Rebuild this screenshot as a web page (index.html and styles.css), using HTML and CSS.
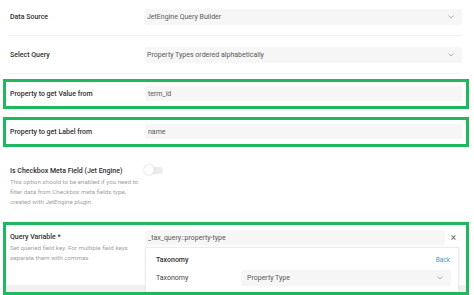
FILE: index.html
```html
<!DOCTYPE html>
<html lang="en">
<head>
    <meta charset="UTF-8">
    <meta name="viewport" content="width=device-width, initial-scale=1.0">
    <title>Query Settings</title>
    <link rel="stylesheet" href="styles.css">
</head>
<body>
    <div class="form">
        <div class="row first">
            <div class="label">Data Source</div>
            <div class="field select">JetEngine Query Builder
                <svg class="chev" width="6" height="4" viewBox="0 0 6 4"><polyline points="0.5,0.5 3,3 5.5,0.5" fill="none" stroke="#9a9a9a" stroke-width="0.8"/></svg>
            </div>
        </div>
        <div class="sep"></div>
        <div class="row second">
            <div class="label">Select Query</div>
            <div class="field select">Property Types ordered alphabetically
                <svg class="chev" width="6" height="4" viewBox="0 0 6 4"><polyline points="0.5,0.5 3,3 5.5,0.5" fill="none" stroke="#9a9a9a" stroke-width="0.8"/></svg>
            </div>
        </div>
        <div class="sep"></div>

        <div class="row hl">
            <div class="label">Property to get Value from</div>
            <div class="field input">term_id</div>
        </div>
        <div class="row hl gap">
            <div class="label">Property to get Label from</div>
            <div class="field input">name</div>
        </div>

        <div class="row check">
            <div class="label-col">
                <div class="label">Is Checkbox Meta Field (Jet Engine)</div>
                <p class="desc">This option should to be enabled if you need to<br>filter data from Checkbox meta fields type,<br>created with JetEngine plugin.</p>
            </div>
            <div class="toggle"></div>
        </div>

        <div class="hl query">
            <div class="q-main">
                <div class="label-col">
                    <div class="label">Query Variable *</div>
                    <p class="desc">Set queried field key. For multiple field keys<br>separate them with commas</p>
                </div>
                <div class="q-ctrl">
                    <div class="field input">_tax_query::property-type</div>
                    <span class="close">&times;</span>
                </div>
            </div>
            <div class="q-foot"></div>
            <div class="popup">
                <div class="pop-head">
                    <span class="pop-title">Taxonomy</span>
                    <span class="back">Back</span>
                </div>
                <div class="pop-row">
                    <span class="pop-label">Taxonomy</span>
                    <div class="field select">Property Type
                        <svg class="chev" width="6" height="4" viewBox="0 0 6 4"><polyline points="0.5,0.5 3,3 5.5,0.5" fill="none" stroke="#9a9a9a" stroke-width="0.8"/></svg>
                    </div>
                </div>
            </div>
        </div>
    </div>
</body>
</html>
```

FILE: styles.css
```css
body {
    margin: 0;
    background: #fff;
    font-family: Roboto, "Liberation Sans", sans-serif;
    color: #333;
}
.form {
    width: 474px;
}
.row {
    display: flex;
    align-items: center;
    padding: 0 12px 0 10px;
}
.row.first {
    padding-top: 9px;
    padding-bottom: 10px;
}
.row.second {
    padding-top: 11px;
    padding-bottom: 10px;
}
.sep {
    height: 1px;
    margin: 0 12px 0 8px;
    background: #f1f1f1;
}
.label {
    width: 135px;
    flex: none;
    font-size: 7px;
    line-height: 10px;
    font-weight: 500;
    color: #2f2f2f;
    white-space: nowrap;
}
.label-col {
    width: 135px;
    flex: none;
}
.field {
    flex: 1;
    height: 15px;
    display: flex;
    align-items: center;
    padding: 0 6px 0 3px;
    background: #f6f6f6;
    border-radius: 2px;
    font-size: 7px;
    color: #5a5a5a;
    white-space: nowrap;
}
.field.select {
    height: 16px;
    justify-content: space-between;
    padding-left: 2px;
}
.chev {
    margin-right: 2px;
}
.hl {
    margin: 0 5px 0 3px;
    border: 3px solid #1fb85e;
}
.row.hl {
    padding: 4px 4px 5px 4px;
}
.first + .sep + .second + .sep + .hl {
    margin-top: 5px;
}
.row.gap {
    margin-top: 8px;
}
.row.check {
    align-items: flex-start;
    padding-top: 19px;
    padding-bottom: 15px;
}
.desc {
    margin: 1px 0 0;
    font-size: 6.2px;
    line-height: 10px;
    color: #a3a3a3;
    white-space: nowrap;
}
.toggle {
    position: relative;
    width: 18px;
    height: 7px;
    margin-top: 1px;
    border-radius: 4px;
    background: #ededed;
}
.toggle::before {
    content: "";
    position: absolute;
    left: -1px;
    top: -2px;
    width: 10px;
    height: 10px;
    border-radius: 50%;
    background: #fff;
    box-shadow: 0 0 2px rgba(0, 0, 0, 0.25);
}
.query {
    position: relative;
}
.q-main {
    display: flex;
    align-items: flex-start;
    height: 55px;
    padding: 5px 4px 0 4px;
}
.q-main .label {
    margin-top: 2px;
}
.q-ctrl {
    flex: 1;
    display: flex;
    align-items: center;
}
.close {
    width: 17px;
    text-align: center;
    font-size: 10px;
    color: #666;
}
.q-foot {
    height: 7px;
    background: #f1f1f1;
}
.popup {
    position: absolute;
    top: 22px;
    left: 139px;
    width: 314px;
    height: 45px;
    box-sizing: border-box;
    padding: 7px 7px 0 10px;
    background: #fff;
    border: 1px solid #ececec;
    border-bottom: none;
    box-shadow: 0 0 3px rgba(0, 0, 0, 0.06);
}
.pop-head {
    display: flex;
    justify-content: space-between;
    font-size: 7px;
    line-height: 10px;
}
.pop-title {
    font-weight: 500;
    color: #2f2f2f;
}
.back {
    font-size: 6.5px;
    color: #3d9bcf;
    margin-right: 1px;
}
.pop-row {
    display: flex;
    align-items: center;
    margin-top: 5px;
}
.pop-label {
    width: 85px;
    flex: none;
    font-size: 7px;
    color: #444;
}
.pop-row .field {
    padding-left: 6px;
}
```
